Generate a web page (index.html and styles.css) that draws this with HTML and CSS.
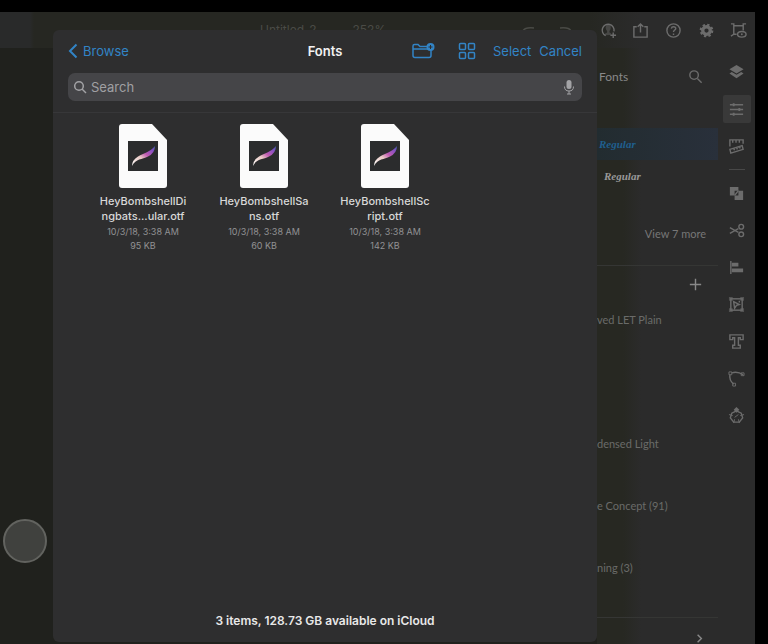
FILE: index.html
```html
<!DOCTYPE html>
<html lang="en">
<head>
<meta charset="utf-8">
<title>Fonts</title>
<link rel="stylesheet" href="styles.css">
</head>
<body>
<div class="app">
  <header class="topbar">
    <div class="topbar-title"><span class="doc">Untitled-2</span><span class="zoom">252%</span></div>
    <div class="history"><svg viewBox="0 0 16 10"><path d="M3 8q0-5 11-4"/></svg><svg viewBox="0 0 16 10"><path d="M13 8q0-5-11-4"/></svg></div>
    <nav class="tools">
      <button class="icon-btn" aria-label="Invite"><svg viewBox="0 0 18 18"><path d="M6 14.500A6.300 6.300 0 1 1 14.800 10"/><path class="solid" d="M4.500 14q0-2 3-3V9.500Q6 8 6 6q0-3 2.700-3t2.700 3q0 2-1.400 3.500V11l1.500.7v2z" opacity=".45"/><path d="M11 14h6M14 11v6"/></svg></button>
      <button class="icon-btn" aria-label="Share"><svg viewBox="0 0 18 18"><path d="M5 5H2v11h14V5h-3M9 11V2M6 5l3-3 3 3"/></svg></button>
      <button class="icon-btn" aria-label="Help"><svg viewBox="0 0 18 18"><circle cx="9" cy="9" r="7"/><path d="M6.700 7q.3-2 2.300-2 2.400 0 2.400 2 0 1-1.300 1.700Q9 9.500 9 10.700M9 12.300v1.500"/></svg></button>
      <button class="icon-btn" aria-label="Settings"><svg viewBox="0 0 18 18"><circle cx="9" cy="9" r="4" stroke-width="3.500"/><circle cx="9" cy="9" r="6" stroke-width="2.500" stroke-dasharray="2.400 2.312"/></svg></button>
      <button class="icon-btn" aria-label="View options"><svg viewBox="0 0 18 18"><path d="M4 4h10v5M4 4v9h3M1 2h3v3M14 5V2h3M1 15l3-2"/><ellipse cx="12.500" cy="13" rx="4.500" ry="3"/><circle class="solid" cx="12.500" cy="13" r="1"/></svg></button>
    </nav>
  </header>
  <div class="workspace">
    <main class="canvas"></main>
    <aside class="panel">
      <section class="recent">
        <div class="panel-head"><h2>Fonts</h2><button class="icon-btn" aria-label="Search fonts"><svg viewBox="0 0 18 18"><circle cx="7.500" cy="7.500" r="4.500"/><path d="M11 11l4.500 4.500"/></svg></button></div>
        <button class="style-row selected">Regular</button>
        <button class="style-row second">Regular</button>
        <a class="more" href="#">View 7 more</a>
      </section>
      <section class="families">
        <button class="icon-btn add" aria-label="Add"><svg viewBox="0 0 18 18"><path d="M9 3v12M3 9h12"/></svg></button>
        <ul>
          <li>ved LET Plain</li>
          <li></li>
          <li>densed Light</li>
          <li>e Concept (91)</li>
          <li>ning (3)</li>
        </ul>
      </section>
      <section class="next"><button class="icon-btn" aria-label="Next"><svg viewBox="0 0 18 18"><path d="M7 5l4 4-4 4"/></svg></button></section>
    </aside>
    <nav class="rail">
      <button class="icon-btn" aria-label="Layers"><svg viewBox="0 0 18 18"><path class="solid" d="M9 1l7.500 4.500L9 10 1.500 5.500z"/><path class="solid" d="M1.500 10l2.500-1.500 5 3 5-3 2.500 1.500L9 15z"/></svg></button>
      <button class="icon-btn active" aria-label="Properties"><svg viewBox="0 0 18 18"><path d="M2 4h14M2 9h14M2 14h14"/><path d="M6 2.500v3M12 7.500v3M6 12.500v3" stroke-width="2"/></svg></button>
      <button class="icon-btn" aria-label="Precision"><svg viewBox="0 0 18 18"><path d="M2 9V2h14v4M5 2v3M8.500 2v3M12 2v3M2 12l13-4 1 4-13 4zM6 11l1 2M9 10l1 2M12 9l1 2"/></svg></button>
      <hr>
      <button class="icon-btn" aria-label="Combine"><svg viewBox="0 0 18 18"><path class="solid" fill-rule="evenodd" d="M2 2h9v4h5v10H7v-5H2zM7 6v5h4V6z"/><path d="M7 11l4-5"/></svg></button>
      <button class="icon-btn" aria-label="Cut"><svg viewBox="0 0 18 18"><path d="M2 6l9 5M2 12l9-5"/><circle cx="14" cy="5" r="2.500"/><circle cx="14" cy="13" r="2.500"/></svg></button>
      <button class="icon-btn" aria-label="Align"><svg viewBox="0 0 18 18"><path d="M3 2v14"/><path d="M4 6h7M4 12h12" stroke-width="4"/></svg></button>
      <button class="icon-btn" aria-label="Object"><svg viewBox="0 0 18 18"><rect x="3" y="3" width="12" height="12"/><path class="solid" d="M1 1h4v4H1zM13 1h4v4h-4zM1 13h4v4H1zM13 13h4v4h-4z" opacity=".6"/><path d="M6 6l6 3-3 1-2 3zM12 5v2"/></svg></button>
      <button class="icon-btn" aria-label="Type"><svg viewBox="0 0 18 18"><path d="M2 2h14v5h-3V5h-2v8h2v3H5v-3h2V5H5v2H2z"/></svg></button>
      <button class="icon-btn" aria-label="Path"><svg viewBox="0 0 18 18"><path d="M6 15Q1 11 2 5M4 3q6-2 12 2"/><path d="M1 2h3v3H1zM14 3h3v3h-3zM5 14h3v3H5z" stroke-width="1"/></svg></button>
      <button class="icon-btn" aria-label="Repeat"><svg viewBox="0 0 18 18"><path d="M9 4l5 2.500 1.500 5L12 16H6l-3.500-4.500L4 6.500z"/><path d="M1 8l4 1M17 8l-4 1M6 17l1-4M12 17l-1-4M7 11l4-3" stroke-width="1"/><path class="solid" d="M9 0l3 3-3 3-3-3z"/></svg></button>
    </nav>
  </div>

  <div class="dialog" role="dialog" aria-labelledby="dialog-title">
    <header class="dialog-head">
      <button class="link back"><svg viewBox="0 0 10 16"><path d="M8.500 1.500L2 8l6.500 6.500" stroke-width="2"/></svg>Browse</button>
      <h1 id="dialog-title">Fonts</h1>
      <div class="actions">
        <button class="link" aria-label="New folder"><svg class="folder" viewBox="0 0 24 18"><path d="M2 7h18v6.500q0 2-2 2H4q-2 0-2-2V4q0-1.500 1.500-1.500H7l2 2h7"/><circle class="solid" cx="19.500" cy="5" r="4"/><path class="plus" d="M17.500 5h4M19.500 3v4"/></svg></button>
        <button class="link" aria-label="View as grid"><svg class="grid-icon" viewBox="0 0 18 18"><rect x="1.500" y="1.500" width="6" height="6" rx="1"/><rect x="10.500" y="1.500" width="6" height="6" rx="1"/><rect x="1.500" y="10.500" width="6" height="6" rx="1"/><rect x="10.500" y="10.500" width="6" height="6" rx="1"/></svg></button>
        <button class="link">Select</button>
        <button class="link">Cancel</button>
      </div>
    </header>
    <label class="search">
      <svg viewBox="0 0 14 14"><circle cx="6" cy="6" r="4.300"/><path d="M9 9l4 4"/></svg>
      <input type="text" placeholder="Search" aria-label="Search">
      <svg class="mic" viewBox="0 0 12 16"><rect class="solid" x="3.500" y="1" width="5" height="9" rx="2.500"/><path d="M1.500 7.500q0 4.500 4.500 4.500t4.500-4.500M6 12v3M4 15h4" stroke-width="1"/></svg>
    </label>
    <svg class="defs" aria-hidden="true">
      <defs>
        <linearGradient id="stroke" x1="0" y1="1" x2="1" y2="0"><stop offset="0" stop-color="#fff"/><stop offset=".4" stop-color="#eac9c4"/><stop offset=".6" stop-color="#c05bb0"/><stop offset=".82" stop-color="#8a50c4"/><stop offset="1" stop-color="#3c5ca8"/></linearGradient>
        <symbol id="file" viewBox="0 0 48 64"><path fill="#fbfbfb" d="M3 0h30l15 16v45q0 3-3 3H3q-3 0-3-3V3q0-3 3-3z"/><path fill="#2b2c2d" d="M9 17h30v30H9z"/><path fill="url(#stroke)" d="M13 42Q13 36 19 32.500C25 29 31 28 36 22Q36 29 29 32.500C23 36 17 34 13 42z"/></symbol>
      </defs>
    </svg>
    <ul class="files">
      <li><svg><use href="#file"/></svg><div class="name">HeyBombshellDi<br>ngbats...ular.otf</div><div class="meta">10/3/18, 3:38 AM<br>95 KB</div></li>
      <li><svg><use href="#file"/></svg><div class="name">HeyBombshellSa<br>ns.otf</div><div class="meta">10/3/18, 3:38 AM<br>60 KB</div></li>
      <li><svg><use href="#file"/></svg><div class="name">HeyBombshellSc<br>ript.otf</div><div class="meta">10/3/18, 3:38 AM<br>142 KB</div></li>
    </ul>
    <footer class="status">3 items, 128.73 GB available on iCloud</footer>
  </div>
  <div class="touch"></div>
</div>
</body>
</html>
```
FILE: styles.css
```css
* { box-sizing: border-box; }
body { margin: 0; background: #000; font-family: Inter, "Liberation Sans", sans-serif; }
h1, h2, ul { margin: 0; padding: 0; list-style: none; }
button { background: none; border: 0; padding: 0; font: inherit; color: inherit; }
svg { fill: none; stroke: currentColor; stroke-width: 1.5; display: block; flex: none; }
.solid { fill: currentColor; stroke: none; }

.app {
  position: relative;
  display: flex;
  flex-direction: column;
  height: 100vh;
  border-top: 12px solid #000;
  border-right: 13px solid #000;
  overflow: hidden;
  background: #2b2b2b;
  color: #6c6c6c;
}
.topbar {
  display: flex;
  align-items: center;
  height: 36px;
  flex: none;
  background: linear-gradient(90deg, #292a2a 0, #292a2a 30px, #262722 34px, #262722 590px, #2b2b2b 640px);
}
.topbar-title { flex: 1; display: flex; gap: 36px; padding: 0 0 2px 260px; font-size: 12px; color: #4a4b46; white-space: nowrap; }
.history { display: flex; gap: 22px; padding: 0 18px 2px 0; color: #4a4b46; }
.history svg { width: 16px; height: 10px; }
.tools { display: flex; width: 163px; justify-content: space-around; }
.icon-btn { display: grid; place-items: center; width: 28px; height: 28px; flex: none; }
.icon-btn svg { width: 17px; height: 17px; }

.workspace { display: flex; flex: 1; min-height: 0; }
.canvas { flex: 1; background: #20211d; }
.panel {
  width: 121px;
  font-family: Lato, "Open Sans", sans-serif;
  font-size: 11px;
  background: linear-gradient(90deg, #272822 0, #272822 26px, #2b2b2b 44px);
}
.recent { height: 218px; border-bottom: 1px solid #353634; display: flex; flex-direction: column; }
.panel-head { display: flex; align-items: center; justify-content: space-between; height: 57px; padding: 0 9px 0 2px; margin-bottom: 23px; }
.panel-head h2 { font-size: 12px; font-weight: 400; color: #898989; }
.style-row { height: 32px; padding-left: 7px; text-align: left; font: italic bold 11px "Liberation Serif", serif; color: #999; }
.style-row.selected { padding-left: 2px; color: #1f5f8e; background: linear-gradient(90deg, #222c30, #29303b); }
.more { align-self: flex-end; margin: 32px 12px 0 0; line-height: 20px; color: #777; text-decoration: none; }
.families { height: 352px; padding-top: 4px; border-bottom: 1px solid #353634; }
.add { margin-left: 84px; color: #888; }
.families li { height: 62px; line-height: 16px; padding-top: 14px; color: #6a6b69; white-space: nowrap; }
.next { display: flex; justify-content: flex-end; padding: 6px 5px 0 0; color: #888; }
.rail { width: 37px; display: flex; flex-direction: column; align-items: center; gap: 9px; padding-top: 10px; }
.rail .active { background: #393939; border-radius: 2px; }
.rail hr { width: 16px; height: 1px; margin: 0; border: 0; background: #484848; }

.dialog {
  position: absolute;
  inset: 18px 158px 2px 53px;
  display: flex;
  flex-direction: column;
  background: #2e2e2f;
  border-radius: 6px;
}
.dialog-head { display: grid; grid-template-columns: 1fr auto 1fr; align-items: center; height: 41px; padding: 0 15px; margin-bottom: 2px; font-size: 13px; }
.dialog-head h1 { font-size: 13px; font-weight: 600; color: #f2f2f2; }
.link { color: #3284c6; }
.back { display: flex; align-items: center; gap: 5px; justify-self: start; }
.back svg { width: 10px; height: 16px; }
.actions { display: flex; align-items: center; justify-content: flex-end; gap: 8px; }
.folder { width: 24px; height: 18px; margin-right: 15px; }
.plus { stroke: #2e2e2f; stroke-width: 1; }
.grid-icon { width: 18px; height: 18px; margin-right: 9px; }
.search { display: flex; align-items: center; gap: 4px; height: 28px; flex: none; margin: 0 15px; padding: 0 7px 0 5px; background: #454548; border-radius: 7px; color: #a3a3a6; }
.search svg { width: 14px; height: 14px; }
.search .mic { width: 12px; height: 16px; }
.search input { flex: 1; min-width: 0; padding: 0; border: 0; outline: 0; background: none; color: #ddd; font: 13px Inter, sans-serif; }
.search input::placeholder { color: #a0a0a3; opacity: 1; }
.defs { position: absolute; width: 0; height: 0; }
.files { flex: 1; display: flex; flex-wrap: wrap; align-content: flex-start; gap: 21px; margin-top: 11px; padding: 11px 40px; border-top: 1px solid #373739; text-align: center; }
.files li { width: 100px; }
.files svg { width: 48px; height: 64px; margin: 0 auto 6px; stroke: none; }
.name { font-size: 11px; line-height: 15px; font-weight: 500; color: #d8d8d8; white-space: nowrap; }
.meta { font-size: 9px; line-height: 14px; margin-top: 1px; color: #929294; }
.status { padding-bottom: 12px; text-align: center; font-size: 12px; line-height: 18px; font-weight: 600; color: #e8e8e8; }
.touch { position: absolute; left: 3px; bottom: 81px; width: 44px; height: 44px; border: 2px solid #62635f; border-radius: 50%; background: #40413e; }
```
